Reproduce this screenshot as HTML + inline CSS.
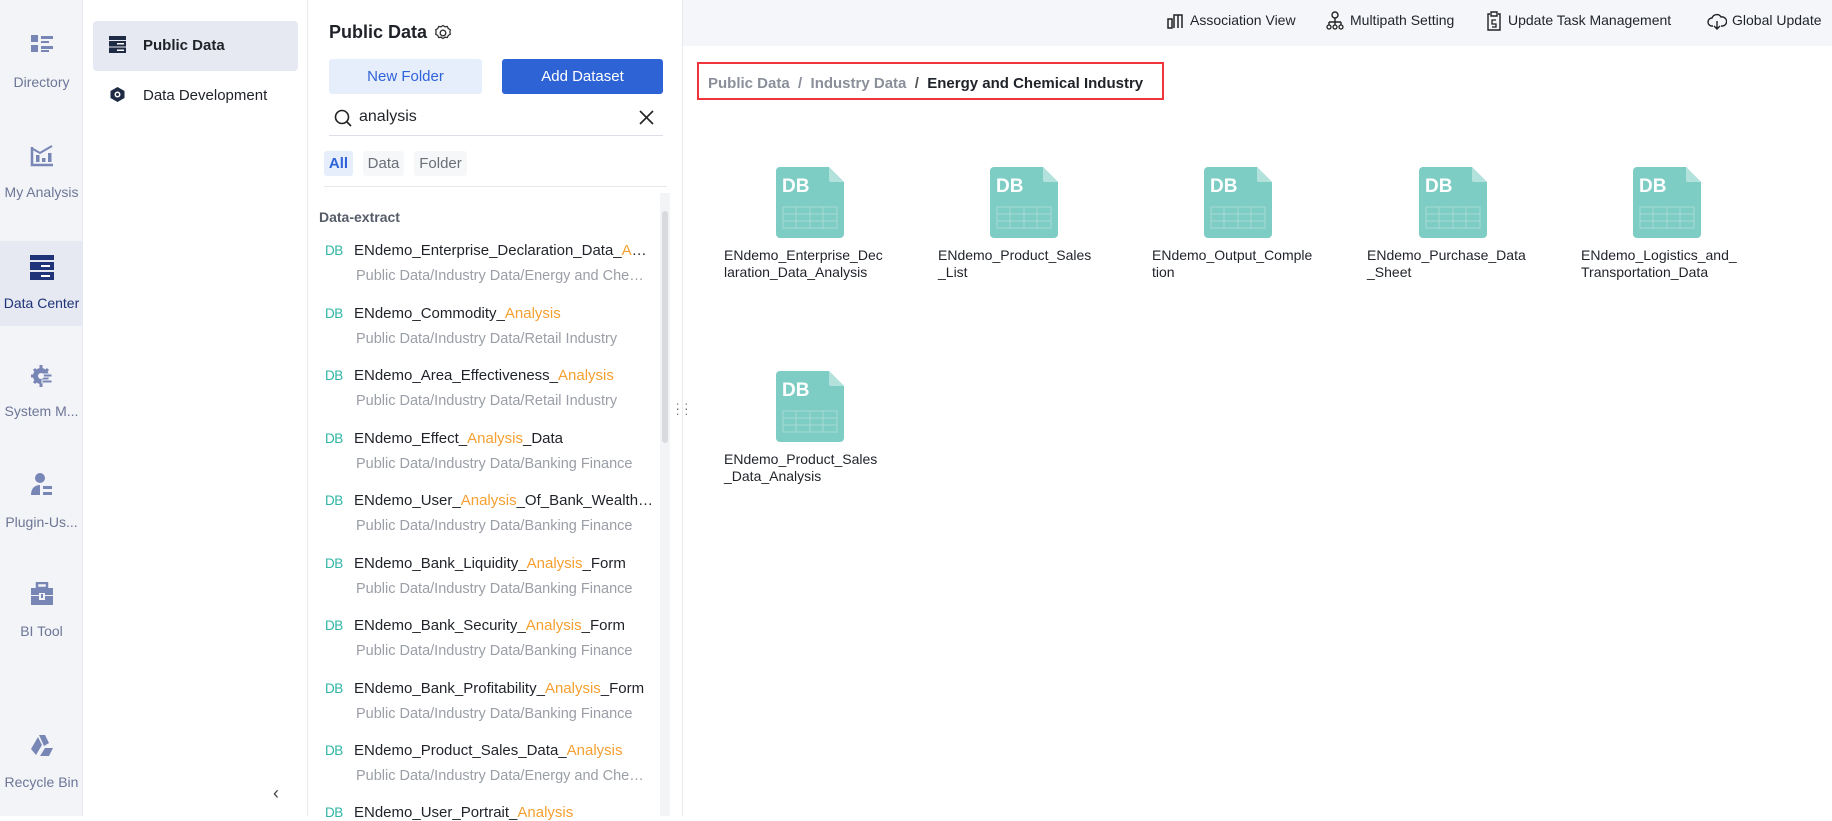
<!DOCTYPE html>
<html><head><meta charset="utf-8"><style>
*{margin:0;padding:0;box-sizing:border-box}
body{width:1832px;height:816px;overflow:hidden;font-family:"Liberation Sans",sans-serif;background:#fff;position:relative;color:#1f2329}
.abs{position:absolute}
.rail{left:0;top:0;width:83px;height:816px;background:#f3f4f8;border-right:1px solid #e8eaf0}
.ri{position:absolute;left:0;width:83px;text-align:center;font-size:14px;color:#6c7696;white-space:nowrap;overflow:hidden}
.p2{left:83px;top:0;width:225px;height:816px;background:#fff;border-right:1px solid #e8eaf0}
.p3{left:308px;top:0;width:375px;height:816px;background:#fff;border-right:1px solid #e8eaf0}
.item{position:absolute;left:17px;font-size:15px;white-space:nowrap}
.item .db{position:absolute;left:0;top:-1px;color:#2fb5a5;font-size:13.5px;letter-spacing:-0.5px}
.item .n{position:absolute;left:29px;top:-2px;width:300px;overflow:hidden;text-overflow:ellipsis}
.item .p{position:absolute;left:31px;top:24px;color:#9a9ea6;font-size:14.5px;width:298px;overflow:hidden;text-overflow:ellipsis}
.o{color:#f5a030}
.tb{top:12px;font-size:14px;color:#1f2329;white-space:nowrap}
.f{position:absolute;width:180px;font-size:14px;line-height:17px;color:#1f2329}
.f svg{position:absolute;left:52px;top:0}
.f div{position:absolute;top:80px;left:0;white-space:nowrap}
</style></head><body>
<div class="abs rail">
 <div class="ri" style="top:33px"><svg width="24" height="22"><rect x="1" y="2" width="7" height="7" fill="#7886b5"/><rect x="1" y="12" width="7" height="7" fill="#7886b5"/><rect x="11" y="3" width="12" height="3" fill="#7886b5"/><rect x="11" y="8" width="8" height="2" fill="#7886b5"/><rect x="11" y="13" width="12" height="3" fill="#7886b5"/><rect x="11" y="17" width="8" height="2" fill="#7886b5"/></svg></div>
 <div class="ri" style="top:74px">Directory</div>
 <div class="ri" style="top:143px"><svg width="24" height="24"><path d="M2 4v18h21" stroke="#7886b5" stroke-width="2.5" fill="none"/><rect x="6" y="12" width="3.5" height="7" fill="#7886b5"/><rect x="12" y="15" width="3.5" height="4" fill="#7886b5"/><rect x="18" y="10" width="3.5" height="9" fill="#7886b5"/><path d="M3 6l7 4 5-3 7-4" stroke="#7886b5" stroke-width="2" fill="none"/></svg></div>
 <div class="ri" style="top:184px">My Analysis</div>
 <div class="abs" style="left:0;top:241px;width:83px;height:85px;background:#e6e9f1"></div>
 <div class="ri" style="top:254px"><svg width="26" height="26"><rect x="1" y="1" width="24" height="5" fill="#1f3378"/><rect x="1" y="8" width="24" height="8" fill="#1f3378"/><rect x="1" y="18" width="24" height="8" fill="#1f3378"/><rect x="12" y="11" width="9" height="2" fill="#fff"/><rect x="12" y="21" width="9" height="2" fill="#fff"/></svg></div>
 <div class="ri" style="top:295px;color:#1f3378">Data Center</div>
 <div class="ri" style="top:364px"><svg width="24" height="24"><circle cx="11" cy="12" r="8" fill="#7886b5"/><path d="M11 1v4M11 19v4M1 12h4M4 5l3 3M4 19l3-3M18 5l-3 3" stroke="#7886b5" stroke-width="3"/><rect x="12" y="10" width="10" height="3" fill="#7886b5" stroke="#f3f4f8" stroke-width="1"/><rect x="12" y="16" width="10" height="3" fill="#7886b5" stroke="#f3f4f8" stroke-width="1"/><circle cx="11" cy="12" r="3" fill="#f3f4f8"/></svg></div>
 <div class="ri" style="top:403px">System M...</div>
 <div class="ri" style="top:472px"><svg width="24" height="24"><circle cx="10" cy="6" r="5" fill="#7886b5"/><path d="M1 23c0-7 4-10 9-10v10z" fill="#7886b5"/><rect x="13" y="14" width="9" height="3" fill="#7886b5"/><rect x="13" y="20" width="9" height="3" fill="#7886b5"/></svg></div>
 <div class="ri" style="top:514px">Plugin-Us...</div>
 <div class="ri" style="top:582px"><svg width="24" height="24"><rect x="7" y="1" width="10" height="5" fill="none" stroke="#7886b5" stroke-width="2.5"/><rect x="1" y="6" width="22" height="7" fill="#7886b5"/><rect x="1" y="14" width="22" height="9" fill="#7886b5"/><rect x="9" y="11" width="6" height="7" fill="#f3f4f8"/><rect x="11" y="12" width="2" height="4" fill="#7886b5"/></svg></div>
 <div class="ri" style="top:623px">BI Tool</div>
 <div class="ri" style="top:733px"><svg width="24" height="24"><path d="M9 2h6l4 8-5 3z" fill="#7886b5"/><path d="M8 4l4 8-6 10-5-6z" fill="#7886b5"/><path d="M10 23l5-8h8l-4 8z" fill="#7886b5"/></svg></div>
 <div class="ri" style="top:774px">Recycle Bin</div>
</div>
<div class="abs p2">
 <div class="abs" style="left:10px;top:21px;width:205px;height:50px;background:#e6e9f1;border-radius:4px"></div>
 <svg class="abs" style="left:26px;top:36px" width="17" height="17"><rect x="0" y="0" width="17" height="4" fill="#1f2a44"/><rect x="0" y="5" width="17" height="5.5" fill="#1f2a44"/><rect x="0" y="11.5" width="17" height="5.5" fill="#1f2a44"/><rect x="8" y="7" width="7" height="1.5" fill="#fff"/><rect x="8" y="13.5" width="7" height="1.5" fill="#fff"/></svg>
 <div class="abs" style="left:60px;top:37px;font-size:15px;font-weight:bold">Public Data</div>
 <svg class="abs" style="left:26px;top:86px" width="17" height="17"><path d="M8.5 1l7 4v7l-7 4-7-4V5z" fill="#1f2a44"/><circle cx="8.5" cy="8.5" r="3" fill="#fff"/><circle cx="8.5" cy="8.5" r="1.5" fill="#1f2a44"/></svg>
 <div class="abs" style="left:60px;top:87px;font-size:15px">Data Development</div>
 <div class="abs" style="left:190px;top:783px;font-size:18px;color:#444">&#8249;</div>
</div>
<div class="abs p3">
 <div class="abs" style="left:21px;top:22px;font-size:18px;font-weight:bold">Public Data</div>
 <svg class="abs" style="left:126px;top:24px" width="18" height="18"><circle cx="9" cy="9" r="2.8" fill="none" stroke="#333" stroke-width="1.4"/><path d="M9 1.5l2 1.3 2.3-.3 1 2.1 2 1.2-.4 2.2.4 2.2-2 1.2-1 2.1-2.3-.3-2 1.3-2-1.3-2.3.3-1-2.1-2-1.2.4-2.2-.4-2.2 2-1.2 1-2.1 2.3.3z" fill="none" stroke="#333" stroke-width="1.3"/></svg>
 <div class="abs" style="left:21px;top:59px;width:153px;height:35px;background:#e7eefb;border-radius:3px;color:#2f63d8;font-size:15px;text-align:center;line-height:35px">New Folder</div>
 <div class="abs" style="left:194px;top:59px;width:161px;height:35px;background:#2e63d6;border-radius:3px;color:#fff;font-size:15px;text-align:center;line-height:35px">Add Dataset</div>
 <svg class="abs" style="left:26px;top:109px" width="18" height="18"><circle cx="8" cy="8" r="6.5" fill="none" stroke="#222" stroke-width="1.6"/><path d="M13 13l4 4" stroke="#222" stroke-width="1.6"/></svg>
 <div class="abs" style="left:51px;top:108px;font-size:16px">analysis</div>
 <svg class="abs" style="left:331px;top:110px" width="15" height="15"><path d="M1 1l13 13M14 1L1 14" stroke="#222" stroke-width="1.6"/></svg>
 <div class="abs" style="left:21px;top:135px;width:334px;height:1px;background:#dcdfe6"></div>
 <div class="abs" style="left:16px;top:151px;width:29px;height:25px;background:#e7eefb;border-radius:3px;color:#2f63d8;font-size:15px;text-align:center;line-height:25px;font-weight:bold">All</div>
 <div class="abs" style="left:55px;top:151px;width:41px;height:25px;background:#f6f7f9;border-radius:3px;color:#6a6f78;font-size:15px;text-align:center;line-height:25px">Data</div>
 <div class="abs" style="left:106px;top:151px;width:53px;height:25px;background:#f6f7f9;border-radius:3px;color:#6a6f78;font-size:15px;text-align:center;line-height:25px">Folder</div>
 <div class="abs" style="left:16px;top:186px;width:343px;height:1px;background:#e6e8ec"></div>
 <div class="abs" style="left:11px;top:209px;font-size:14px;font-weight:bold;color:#555c68">Data-extract</div>
 <div class="abs" style="left:352px;top:193px;width:10px;height:623px;background:#f3f4f6"></div>
 <div class="abs" style="left:354px;top:211px;width:6px;height:232px;background:#d8dadf;border-radius:3px"></div>
 <div class="item" style="top:244px"><span class="db">DB</span><span class="n">ENdemo_Enterprise_Declaration_Data_<span class="o">Analysis</span></span><span class="p">Public Data/Industry Data/Energy and Chemical Industry</span></div>
 <div class="item" style="top:307px"><span class="db">DB</span><span class="n">ENdemo_Commodity_<span class="o">Analysis</span></span><span class="p">Public Data/Industry Data/Retail Industry</span></div>
 <div class="item" style="top:369px"><span class="db">DB</span><span class="n">ENdemo_Area_Effectiveness_<span class="o">Analysis</span></span><span class="p">Public Data/Industry Data/Retail Industry</span></div>
 <div class="item" style="top:432px"><span class="db">DB</span><span class="n">ENdemo_Effect_<span class="o">Analysis</span>_Data</span><span class="p">Public Data/Industry Data/Banking Finance</span></div>
 <div class="item" style="top:494px"><span class="db">DB</span><span class="n">ENdemo_User_<span class="o">Analysis</span>_Of_Bank_Wealth_Management</span><span class="p">Public Data/Industry Data/Banking Finance</span></div>
 <div class="item" style="top:557px"><span class="db">DB</span><span class="n">ENdemo_Bank_Liquidity_<span class="o">Analysis</span>_Form</span><span class="p">Public Data/Industry Data/Banking Finance</span></div>
 <div class="item" style="top:619px"><span class="db">DB</span><span class="n">ENdemo_Bank_Security_<span class="o">Analysis</span>_Form</span><span class="p">Public Data/Industry Data/Banking Finance</span></div>
 <div class="item" style="top:682px"><span class="db">DB</span><span class="n">ENdemo_Bank_Profitability_<span class="o">Analysis</span>_Form</span><span class="p">Public Data/Industry Data/Banking Finance</span></div>
 <div class="item" style="top:744px"><span class="db">DB</span><span class="n">ENdemo_Product_Sales_Data_<span class="o">Analysis</span></span><span class="p">Public Data/Industry Data/Energy and Chemical Industry</span></div>
 <div class="item" style="top:806px"><span class="db">DB</span><span class="n">ENdemo_User_Portrait_<span class="o">Analysis</span></span></div>
</div>
<div class="abs" style="left:676px;top:404px;font-size:12px;color:#666;line-height:5px;letter-spacing:1px">: :<br>: :</div>
<div class="abs" style="left:683px;top:0;width:1149px;height:46px;background:#f5f6f9"></div>
<svg class="abs" style="left:1166px;top:12px" width="18" height="18"><path d="M2 16V7h4v9zM8 16V3h4v13M12 3l4 0v13" fill="none" stroke="#222" stroke-width="1.5"/></svg>
<div class="abs tb" style="left:1190px">Association View</div>
<svg class="abs" style="left:1326px;top:11px" width="18" height="20"><circle cx="9" cy="4" r="3" fill="none" stroke="#222" stroke-width="1.4"/><path d="M9 7v4M3 11h12M3 11v3M9 11v3M15 11v3" stroke="#222" stroke-width="1.4"/><circle cx="3" cy="16" r="2" fill="none" stroke="#222" stroke-width="1.3"/><circle cx="9" cy="16" r="2" fill="none" stroke="#222" stroke-width="1.3"/><circle cx="15" cy="16" r="2" fill="none" stroke="#222" stroke-width="1.3"/></svg>
<div class="abs tb" style="left:1350px">Multipath Setting</div>
<svg class="abs" style="left:1486px;top:11px" width="16" height="20"><path d="M4 3H2v16h12V3h-2M5 1h6v4H5z" fill="none" stroke="#222" stroke-width="1.4"/><path d="M10 9H6v4h4v3H6" fill="none" stroke="#222" stroke-width="1.3"/></svg>
<div class="abs tb" style="left:1508px">Update Task Management</div>
<svg class="abs" style="left:1707px;top:11px" width="20" height="20"><path d="M6 15H5a4 4 0 010-8 5 5 0 019-1 4 4 0 012 9h-2M10 10v8M7 15l3 3 3-3" fill="none" stroke="#222" stroke-width="1.4"/></svg>
<div class="abs tb" style="left:1732px">Global Update</div>
<div class="abs" style="left:697px;top:62px;width:467px;height:38px;border:2px solid #f0353a"></div>
<div class="abs" style="left:708px;top:75px;font-size:15px;color:#8a8f99;font-weight:bold;white-space:nowrap">Public Data &nbsp;/&nbsp; Industry Data &nbsp;<span style="color:#555">/</span>&nbsp; <span style="color:#1f2329">Energy and Chemical Industry</span></div>
<svg width="0" height="0" style="position:absolute"><defs><g id="fi"><path d="M4 0h49l15 15v52a4 4 0 01-4 4H4a4 4 0 01-4-4V4a4 4 0 014-4z" fill="#7ecdc4"/><path d="M53 0l15 15H55a2 2 0 01-2-2z" fill="#b3e2dc"/><text x="6" y="25" font-family="Liberation Sans" font-weight="bold" font-size="19" fill="#fff">DB</text><g stroke="#a6dcd5" stroke-width="1" fill="none"><rect x="7" y="40" width="54" height="21"/><path d="M7 47h54M7 54h54M20 40v21M34 40v21M47 40v21"/></g></g></defs></svg>
<div class="f" style="left:724px;top:167px"><svg width="68" height="72"><use href="#fi"/></svg><div>ENdemo_Enterprise_Dec<br>laration_Data_Analysis</div></div>
<div class="f" style="left:938px;top:167px"><svg width="68" height="72"><use href="#fi"/></svg><div>ENdemo_Product_Sales<br>_List</div></div>
<div class="f" style="left:1152px;top:167px"><svg width="68" height="72"><use href="#fi"/></svg><div>ENdemo_Output_Comple<br>tion</div></div>
<div class="f" style="left:1367px;top:167px"><svg width="68" height="72"><use href="#fi"/></svg><div>ENdemo_Purchase_Data<br>_Sheet</div></div>
<div class="f" style="left:1581px;top:167px"><svg width="68" height="72"><use href="#fi"/></svg><div>ENdemo_Logistics_and_<br>Transportation_Data</div></div>
<div class="f" style="left:724px;top:371px"><svg width="68" height="72"><use href="#fi"/></svg><div>ENdemo_Product_Sales<br>_Data_Analysis</div></div>
</body></html>
